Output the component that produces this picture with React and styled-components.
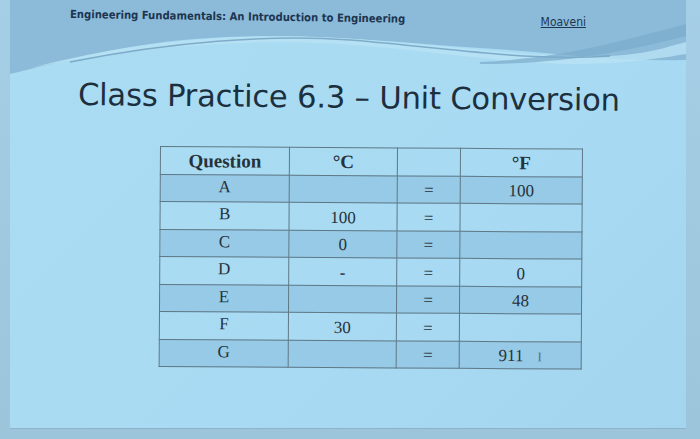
import styled, { createGlobalStyle } from 'styled-components';

const GlobalStyle = createGlobalStyle`
  html, body {
    margin: 0;
    padding: 0;
    background: #9fc6dc;
  }
  body {
    width: 700px;
    height: 439px;
    overflow: hidden;
  }
`;

const rows = [
  { q: 'A', c: '', f: '100' },
  { q: 'B', c: '100', f: '' },
  { q: 'C', c: '0', f: '' },
  { q: 'D', c: '-', f: '0' },
  { q: 'E', c: '', f: '48' },
  { q: 'F', c: '30', f: '' },
  { q: 'G', c: '', f: '911', cursor: true },
];

const Frame = styled.div`
  width: 700px;
  height: 439px;
  padding: 0 14px 10px 10px;
  box-sizing: border-box;
  background: linear-gradient(180deg, #a5cfe6 0%, #9cc4da 100%);
`;

const Slide = styled.div`
  position: relative;
  height: 428px;
  background: linear-gradient(135deg, #aadcf2 0%, #a8dbf3 60%, #a3d5ee 100%);
  box-shadow: 0 1px 0 #8eb3c8;
  overflow: hidden;
`;

const Banner = styled.svg`
  position: absolute;
  left: 0;
  top: 0;
  width: 676px;
  height: 80px;
`;

const Header = styled.div`
  position: relative;
  display: flex;
  justify-content: space-between;
  align-items: flex-start;
  padding: 8px 100px 0 60px;
  height: 60px;
  box-sizing: border-box;
  font-family: 'DejaVu Sans Condensed', 'DejaVu Sans', sans-serif;
  font-size: 11.2px;
  color: #1d3550;
`;

const Course = styled.span`
  font-weight: bold;
  transform: rotate(0.8deg);
  transform-origin: left center;
`;

const Author = styled.span`
  text-decoration: underline;
  font-size: 12px;
  margin-top: 7px;
`;

const Title = styled.h1`
  position: relative;
  margin: 17px 0 0 68px;
  font-family: 'DejaVu Sans', sans-serif;
  font-weight: normal;
  font-size: 30.6px;
  letter-spacing: -0.2px;
  color: #1c2f3e;
  transform: rotate(0.6deg);
  transform-origin: left center;
`;

const Table = styled.table`
  position: relative;
  margin: 34px 0 0 150px;
  border-collapse: collapse;
  font-family: 'Liberation Serif', 'DejaVu Serif', serif;
  color: #26323a;
  transform: rotate(0.35deg);
  transform-origin: left top;
`;

const Row = styled.tr`
  height: 27.5px;
`;

const Cell = styled.td`
  width: ${(p) => p.$w}px;
  padding: 0;
  line-height: 1;
  border: 1.5px solid #5f7886;
  text-align: center;
  font-size: 17px;
  vertical-align: ${(p) => (p.$low ? 'bottom' : 'top')};
  padding-bottom: ${(p) => (p.$low ? 4 : 0)}px;
  padding-top: ${(p) => (p.$low ? 0 : 3)}px;
  background: ${(p) => (p.$dark ? '#96cae6' : 'transparent')};
`;

const Head = styled.th`
  width: ${(p) => p.$w}px;
  padding: 0;
  line-height: 1;
  border: 1.5px solid #5f7886;
  text-align: center;
  font-size: 19px;
  font-weight: bold;
  background: transparent;
`;

const Cursor = styled.span`
  margin-left: 14px;
  font-size: 13px;
  color: #5d6e78;
`;

export default function App() {
  return (
    <>
      <GlobalStyle />
      <Frame>
        <Slide>
          <Banner viewBox="0 0 676 80" preserveAspectRatio="none">
            <path d="M0 0 H676 V60 C600 62 540 52 470 48 C380 42 300 32 200 38 C120 42 50 62 0 74 Z" fill="#8cbbd9" />
            <path d="M20 68 C120 42 220 32 330 38 C430 44 520 58 600 56 C640 54 660 46 676 42 V54 C640 60 610 64 560 64 C480 62 420 50 330 44 C230 38 120 48 20 68 Z" fill="#b9e2f4" opacity="0.8" />
            <path d="M60 62 C160 42 260 34 340 40 C440 48 520 62 600 56" fill="none" stroke="#6f9fbf" strokeWidth="1.5" opacity="0.8" />
            <path d="M470 62 C560 58 620 38 676 24 V36 C620 50 560 64 470 64 Z" fill="#7aabcb" opacity="0.7" />
          </Banner>
          <Header>
            <Course>Engineering Fundamentals: An Introduction to Engineering</Course>
            <Author>Moaveni</Author>
          </Header>
          <Title>Class Practice 6.3 – Unit Conversion</Title>
          <Table>
            <thead>
              <Row>
                <Head $w={128}>Question</Head>
                <Head $w={107}>°C</Head>
                <Head $w={62}></Head>
                <Head $w={121}>°F</Head>
              </Row>
            </thead>
            <tbody>
              {rows.map((r, i) => (
                <Row key={r.q}>
                  <Cell $w={128} $dark={i % 2 === 0}>{r.q}</Cell>
                  <Cell $w={107} $dark={i % 2 === 0} $low>{r.c}</Cell>
                  <Cell $w={62} $dark={i % 2 === 0} $low>=</Cell>
                  <Cell $w={121} $dark={i % 2 === 0} $low>
                    {r.f}
                    {r.cursor && <Cursor>I</Cursor>}
                  </Cell>
                </Row>
              ))}
            </tbody>
          </Table>
        </Slide>
      </Frame>
    </>
  );
}
